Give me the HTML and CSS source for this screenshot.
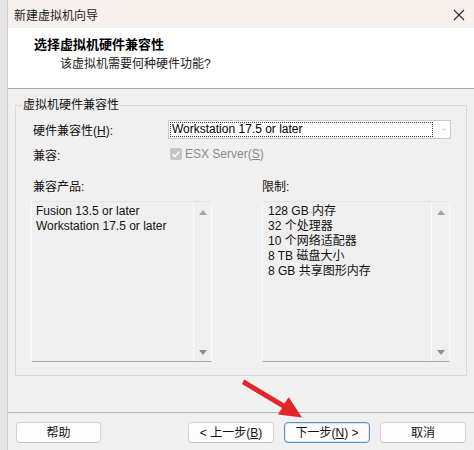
FILE: index.html
```html
<!DOCTYPE html>
<html lang="zh-CN">
<head>
<meta charset="utf-8">
<title>新建虚拟机向导</title>
<link rel="stylesheet" href="styles.css">
</head>
<body>
<div class="window">
  <div class="titlebar">
    <span class="title">新建虚拟机向导</span>
    <svg class="close" width="12" height="12" viewBox="0 0 12 12"><path d="M1 1L11 11M11 1L1 11" stroke="#2b2b2b" stroke-width="1.1" fill="none"/></svg>
  </div>
  <div class="header">
    <div class="h-title">选择虚拟机硬件兼容性</div>
    <div class="h-sub">该虚拟机需要何种硬件功能?</div>
  </div>
  <div class="content">
    <fieldset class="group">
      <legend>虚拟机硬件兼容性</legend>
      <div class="form">
        <div class="row row-combo">
          <span class="label">硬件兼容性(<u>H</u>):</span>
          <div class="combo">
            <span class="focus">Workstation 17.5 or later</span>
            <svg class="chev" width="8" height="5" viewBox="0 0 8 5"><path d="M0.5 0.5L4 4L7.5 0.5" stroke="#707070" stroke-width="1" fill="none"/></svg>
          </div>
        </div>
        <div class="row row-check">
          <span class="label">兼容:</span>
          <span class="check"><svg width="12" height="12" viewBox="0 0 12 12"><rect x="0" y="0" width="12" height="12" rx="2" fill="#c6c6c6"/><path d="M2.8 6.2L5 8.4L9.4 3.6" stroke="#fff" stroke-width="1.4" fill="none"/></svg></span>
          <span class="check-text">ESX Server(<u>S</u>)</span>
        </div>
        <div class="cols">
          <div class="col col-left">
            <div class="col-label">兼容产品:</div>
            <div class="list">
              <div class="items">
                <div>Fusion 13.5 or later</div>
                <div>Workstation 17.5 or later</div>
              </div>
              <div class="sbar">
                <span class="tri-up"></span>
                <span class="tri-down"></span>
              </div>
            </div>
          </div>
          <div class="col col-right">
            <div class="col-label">限制:</div>
            <div class="list">
              <div class="items">
                <div>128 GB 内存</div>
                <div>32 个处理器</div>
                <div>10 个网络适配器</div>
                <div>8 TB 磁盘大小</div>
                <div>8 GB 共享图形内存</div>
              </div>
              <div class="sbar">
                <span class="tri-up"></span>
                <span class="tri-down"></span>
              </div>
            </div>
          </div>
        </div>
      </div>
    </fieldset>
  </div>
  <div class="footer">
    <button class="btn btn-help">帮助</button>
    <div class="nav">
      <button class="btn">&lt; 上一步(<u>B</u>)</button>
      <button class="btn btn-next">下一步(<u>N</u>) &gt;</button>
      <button class="btn">取消</button>
    </div>
  </div>
</div>
<svg class="arrow" width="474" height="450" viewBox="0 0 474 450">
  <polygon points="244.2,379.6 284.3,403.6 288.8,397.2 302,417.5 278,414.6 282.1,408 242,384.1" fill="#e3262b"/>
</svg>
</body>
</html>
```

FILE: styles.css
```css
* { box-sizing: border-box; }

html, body {
  margin: 0;
  padding: 0;
}

body {
  width: 474px;
  height: 450px;
  overflow: hidden;
  position: relative;
  background: #e4e4e4;
  font-family: "Liberation Sans", "Noto Sans CJK SC", sans-serif;
  font-size: 12px;
  color: #111;
}

.window {
  margin-left: 7px;
  border-left: 1px solid #cdcdcd;
  height: 450px;
  display: flex;
  flex-direction: column;
  background: #f0f0f0;
}

.titlebar {
  height: 28px;
  flex: none;
  background: #f8f0ec;
  display: flex;
  align-items: center;
  justify-content: space-between;
  padding: 0 9px 0 6px;
}

.title {
  font-size: 12px;
  color: #1a1a1a;
}

.close { display: block; margin-top: 1px; }

.header {
  height: 61px;
  flex: none;
  background: #fff;
  border-bottom: 1px solid #a7a7a7;
  padding: 8px 0 0 26px;
}

.h-title {
  font-weight: bold;
  font-size: 13px;
  line-height: 18px;
  color: #000;
}

.h-sub {
  margin: 2px 0 0 26px;
  line-height: 16px;
  color: #222;
}

.content {
  flex: 1;
  padding: 8px 7px 0 7px;
}

.group {
  margin: 0;
  padding: 0;
  border: 1px solid #d9d9d9;
  min-width: 0;
}

.group legend {
  margin-left: 6px;
  padding: 0 1px;
  line-height: 16px;
  color: #111;
}

.form {
  padding: 0 15px 13px 15px;
}

.row {
  display: flex;
  align-items: center;
}

.row .label {
  width: 137px;
  padding-left: 2px;
  flex: none;
}

.row-combo {
  margin-top: 7px;
  height: 19px;
}

.combo {
  width: 283px;
  height: 19px;
  background: #fff;
  border: 1px solid #c9c9c9;
  display: flex;
  align-items: center;
  padding: 1px 4px 1px 1px;
}

.focus {
  width: 263px;
  height: 15px;
  border: 1px dotted #3a3a3a;
  line-height: 13px;
  padding-left: 1px;
  color: #000;
  flex: none;
}

.chev { margin-left: 9px; }

.row-check {
  margin-top: 7px;
  height: 16px;
}

.check {
  display: flex;
  margin-left: 2px;
}

.check-text {
  margin-left: 3px;
  color: #8a8a8a;
}

.cols {
  display: flex;
  gap: 50px;
  margin-top: 17px;
}

.col-left { width: 181px; }
.col-right { width: 188px; }

.col-label {
  line-height: 16px;
  height: 16px;
}

.col-left .col-label { padding-left: 2px; }

.list {
  margin-top: 6px;
  height: 161px;
  display: flex;
  border-top: 1px solid #e4e4e4;
  border-left: 1px solid #fafafa;
  border-right: 1px solid #fafafa;
  border-bottom: 1px solid #a4a4a4;
  background: #efefef;
}

.items {
  flex: 1;
  padding: 2px 0 0 4px;
  line-height: 15px;
  color: #111;
}

.col-right .items { padding-left: 5px; }

.sbar {
  width: 18px;
  flex: none;
  border-left: 1px solid #fbfbfb;
  display: flex;
  flex-direction: column;
  justify-content: space-between;
  align-items: center;
  padding: 8px 0 6px;
}

.tri-up {
  width: 0;
  height: 0;
  border-left: 4px solid transparent;
  border-right: 4px solid transparent;
  border-bottom: 5px solid #a3a3a3;
}

.tri-down {
  width: 0;
  height: 0;
  border-left: 4px solid transparent;
  border-right: 4px solid transparent;
  border-top: 5px solid #8f8f8f;
}

.footer {
  height: 38px;
  flex: none;
  border-top: 1px solid #b5b5b5;
  display: flex;
  justify-content: space-between;
  align-items: flex-start;
  padding: 9px 8px 0 8px;
}

.nav {
  display: flex;
  gap: 10px;
}

.btn {
  width: 86px;
  height: 21px;
  padding: 0;
  font: inherit;
  font-size: 12px;
  color: #111;
  background: #fdfdfd;
  border: 1px solid #d3d3d3;
  border-bottom-color: #c2c2c2;
  border-radius: 4px;
  line-height: 18px;
  text-align: center;
}

.btn-help { width: 85px; }

.btn-next {
  border: 1px solid #5a8fc9;
  box-shadow: inset 0 0 0 1px #dbe8f6;
}

.arrow {
  position: absolute;
  left: 0;
  top: 0;
  pointer-events: none;
}
```
